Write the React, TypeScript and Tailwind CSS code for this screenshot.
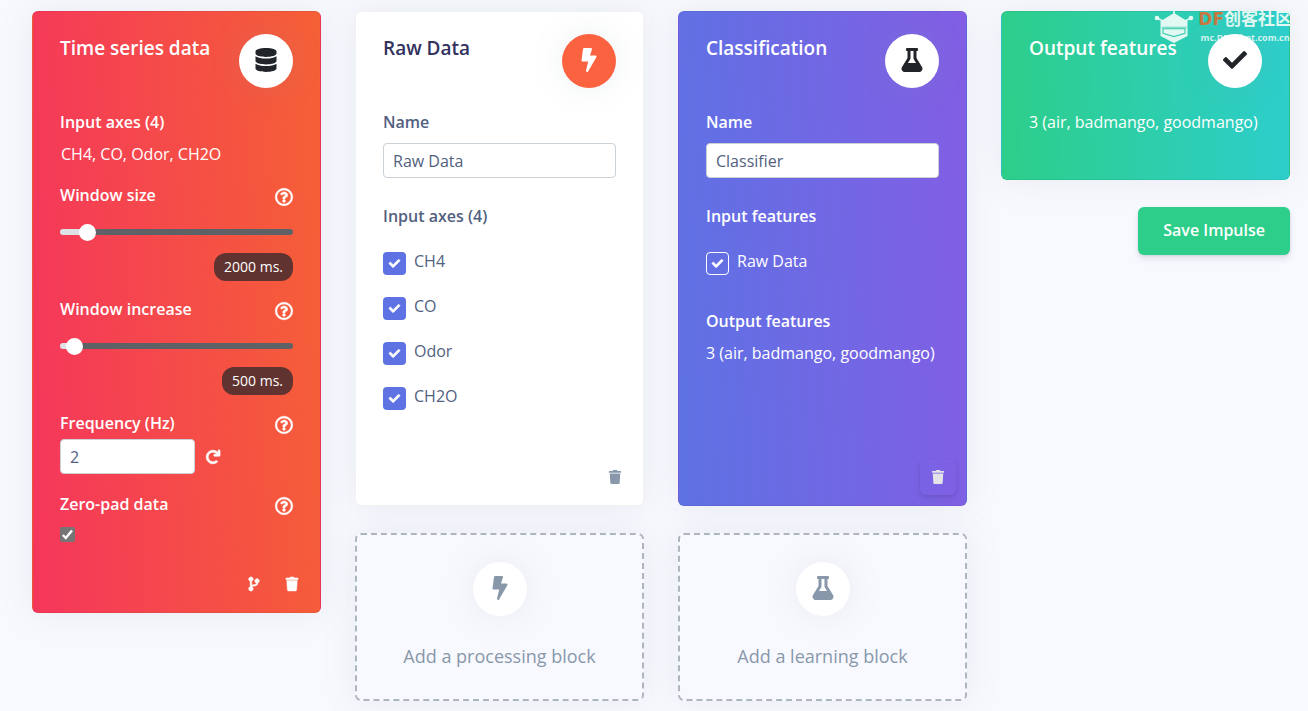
import React from "react";
import {
  FaBolt,
  FaCheck,
  FaCodeBranch,
  FaDatabase,
  FaFlask,
  FaRegQuestionCircle,
  FaRedo,
  FaTrash,
} from "react-icons/fa";

const shadow = "shadow-[0_0_32px_rgba(136,152,170,0.15)]";

function Card({ className, children }: { className: string; children: React.ReactNode }) {
  return (
    <section className={`flex flex-col rounded-md border border-black/5 px-[27px] pt-[22px] ${shadow} ${className}`}>
      {children}
    </section>
  );
}

function CardHeader({ title, titleClass, iconClass, children }: {
  title: string;
  titleClass: string;
  iconClass: string;
  children: React.ReactNode;
}) {
  return (
    <header className="flex h-[76px] items-start justify-between">
      <h2 className={`text-[19px] leading-7 font-semibold whitespace-nowrap ${titleClass}`}>{title}</h2>
      <span className={`flex size-[54px] shrink-0 items-start justify-center rounded-full pt-[14px] text-2xl ${shadow} ${iconClass}`}>
        {children}
      </span>
    </header>
  );
}

function Help({ label }: { label: string }) {
  return (
    <button type="button" aria-label={label} className="mt-[5px] text-lg">
      <FaRegQuestionCircle className="overflow-visible stroke-current stroke-[14]" />
    </button>
  );
}

function Slider({ id, label, value, max, fillClass, unitText }: {
  id: string;
  label: string;
  value: number;
  max: number;
  fillClass: string;
  unitText: string;
}) {
  return (
    <div className="h-[114px]">
      <div className="flex h-7 items-start justify-between">
        <label htmlFor={id} className="text-base leading-6 font-semibold">{label}</label>
        <Help label={`About ${label}`} />
      </div>
      <input
        id={id}
        type="range"
        min={0}
        max={max}
        defaultValue={value}
        className={`mt-[18px] block h-[6px] w-full appearance-none rounded-full ${fillClass} [&::-webkit-slider-thumb]:size-[17px] [&::-webkit-slider-thumb]:appearance-none [&::-webkit-slider-thumb]:rounded-full [&::-webkit-slider-thumb]:bg-white`}
      />
      <div className="mt-[18px] flex justify-end">
        <output htmlFor={id} className="rounded-xl bg-[#613330] px-[10px] text-sm leading-7 text-white">{unitText}</output>
      </div>
    </div>
  );
}

function Check({ label, boxClass, textClass }: { label: string; boxClass: string; textClass: string }) {
  return (
    <label className={`flex h-[45px] items-start gap-2 text-base leading-6 ${textClass}`}>
      <span className="mt-[3px] grid size-[23px] shrink-0">
        <input type="checkbox" defaultChecked className={`col-start-1 row-start-1 size-full appearance-none rounded-[4px] ${boxClass}`} />
        <FaCheck className="pointer-events-none col-start-1 row-start-1 size-[11px] place-self-center overflow-visible stroke-current stroke-[30] text-white" />
      </span>
      {label}
    </label>
  );
}

function NameField({ id, value, labelClass }: { id: string; value: string; labelClass: string }) {
  return (
    <>
      <label htmlFor={id} className={`text-base leading-6 font-semibold ${labelClass}`}>Name</label>
      <input
        id={id}
        defaultValue={value}
        className="mt-[9px] h-[35px] w-full rounded-[4px] border border-[#cad1d7] bg-white px-[9px] text-base text-[#525f7f]"
      />
    </>
  );
}

function AddBlock({ label, children }: { label: string; children: React.ReactNode }) {
  return (
    <button
      type="button"
      className={`flex h-[168px] w-full flex-col items-center rounded-md border-2 border-dashed border-[#adb5bd] bg-[#f8f9fe] pt-[27px] text-[#8898aa] ${shadow}`}
    >
      <span className={`flex size-[54px] items-start justify-center rounded-full bg-white pt-[14px] text-2xl ${shadow}`}>
        {children}
      </span>
      <span className="mt-[26px] text-lg leading-7">{label}</span>
    </button>
  );
}

function Watermark() {
  return (
    <div className="pointer-events-none absolute top-[6px] right-4 z-0 flex items-start gap-1">
      <svg viewBox="0 0 40 38" className="h-[38px] w-10" aria-hidden="true">
        <g fill="#e2f8f2">
          <circle cx="20" cy="3" r="2.100" />
          <circle cx="3" cy="12" r="2.300" />
          <circle cx="37" cy="12" r="2.300" />
          <path d="M20 7 33.500 15.200V30L20 37 6.500 30V15.200Z" />
          <path d="M20 3v6M3 12l6 3M37 12l-6 3" stroke="#e2f8f2" strokeWidth="1.600" />
        </g>
        <path d="M7.500 20.700h25v1.800h-25Z" fill="#39ccac" opacity=".55" />
        <path d="M9 22.800h22v4.600L20 30.600 9 27.400Z" fill="none" stroke="#39ccac" strokeWidth="1.100" />
      </svg>
      <div className="flex flex-col items-center">
        <p className="font-['Open_Sans','Noto_Sans_CJK_SC',sans-serif] text-[17px] leading-[26px] font-bold whitespace-nowrap text-[#e2f8f2]">
          <span className="font-['DejaVu_Sans',sans-serif] text-[#c87840]">DF</span>创客社区
        </p>
        <p className="font-['Open_Sans',sans-serif] text-[9px] leading-3 font-bold text-[#d5f6f1]">mc.DFRobot.com.cn</p>
      </div>
    </div>
  );
}

export default function App() {
  return (
    <main className="min-h-screen bg-[#f8f9fe] pt-[11px] pr-[18px] pb-[10px] pl-8 font-['Open_Sans',sans-serif]">
      <div className="grid grid-cols-4 items-start gap-x-[34px]">
        <Card className="bg-[linear-gradient(87deg,#f5365c,#f56036)] pb-[21px] text-white">
          <CardHeader title="Time series data" titleClass="text-white" iconClass="bg-white text-[#212529]">
            <FaDatabase />
          </CardHeader>
          <h3 className="text-base leading-6 font-semibold">Input axes (4)</h3>
          <p className="mt-2 mb-[17px] pl-px text-base leading-6">CH4, CO, Odor, CH2O</p>
          <Slider id="window-size" label="Window size" value={9} max={100} unitText="2000 ms." fillClass="bg-[linear-gradient(to_right,#dee2e6_12%,#5e6266_12%)]" />
          <Slider id="window-increase" label="Window increase" value={3} max={100} unitText="500 ms." fillClass="bg-[linear-gradient(to_right,#dee2e6_6%,#5e6266_6%)]" />
          <div className="flex h-7 items-start justify-between">
            <label htmlFor="frequency" className="text-base leading-6 font-semibold">Frequency (Hz)</label>
            <Help label="About frequency" />
          </div>
          <div className="flex items-center gap-[11px]">
            <input id="frequency" defaultValue="2" className="h-[35px] w-[135px] rounded-[4px] border border-[#cad1d7] bg-white px-[9px] text-base text-[#525f7f]" />
            <button type="button" aria-label="Reset frequency" className="text-sm">
              <FaRedo className="overflow-visible stroke-current stroke-[24]" />
            </button>
          </div>
          <div className="mt-[18px] flex h-7 items-start justify-between">
            <label htmlFor="zero-pad" className="text-base leading-6 font-semibold">Zero-pad data</label>
            <Help label="About zero-padding" />
          </div>
          <span className="mt-[7px] grid size-[15px]">
            <input id="zero-pad" type="checkbox" defaultChecked className="col-start-1 row-start-1 size-full appearance-none rounded-[2px] bg-[#757575]" />
            <svg viewBox="0 0 15 15" className="pointer-events-none col-start-1 row-start-1 size-[15px]" aria-hidden="true">
              <path d="m2.800 8 3 3L12 3.500" fill="none" stroke="currentColor" strokeWidth="2.400" />
            </svg>
          </span>
          <div className="mt-[35px] -mr-[6px] flex items-center justify-end gap-6 text-sm">
            <button type="button" aria-label="Versions">
              <FaCodeBranch className="overflow-visible stroke-current stroke-[24]" />
            </button>
            <button type="button" aria-label="Delete input block">
              <FaTrash className="overflow-visible stroke-current stroke-[16]" />
            </button>
          </div>
        </Card>

        <div className="flex flex-col gap-[27px]">
          <Card className="h-[495px] bg-white text-[#525f7f]">
            <CardHeader title="Raw Data" titleClass="text-[#32325d]" iconClass="bg-[#fb6340] text-white">
              <FaBolt />
            </CardHeader>
            <NameField id="dsp-name" value="Raw Data" labelClass="text-[#525f7f]" />
            <h3 className="mt-[26px] mb-[21px] text-base leading-6 font-semibold">Input axes (4)</h3>
            {["CH4", "CO", "Odor", "CH2O"].map((axis) => (
              <Check key={axis} label={axis} boxClass="bg-[#5e72e4]" textClass="text-[#525f7f]" />
            ))}
            <button type="button" aria-label="Delete processing block" className="mt-auto -mr-[6px] mb-[21px] self-end text-sm text-[#8898aa]">
              <FaTrash />
            </button>
          </Card>
          <AddBlock label="Add a processing block"><FaBolt /></AddBlock>
        </div>

        <div className="flex flex-col gap-[27px]">
          <Card className="h-[495px] bg-[linear-gradient(87deg,#5e72e4,#825ee4)] text-white">
            <CardHeader title="Classification" titleClass="text-white" iconClass="bg-white text-[#212529]">
              <FaFlask />
            </CardHeader>
            <NameField id="learn-name" value="Classifier" labelClass="text-white" />
            <h3 className="mt-[26px] mb-[21px] text-base leading-6 font-semibold">Input features</h3>
            <Check label="Raw Data" boxClass="border border-white" textClass="text-white" />
            <h3 className="mt-[15px] text-base leading-6 font-semibold">Output features</h3>
            <p className="mt-2 text-base leading-6 whitespace-nowrap">3 (air, badmango, goodmango)</p>
            <button
              type="button"
              aria-label="Delete learning block"
              className="mt-auto -mr-[17px] mb-[10px] flex size-9 items-center justify-center self-end rounded-md text-sm text-[#e2e4e8] shadow-[0_4px_6px_rgba(50,50,93,0.11),0_1px_3px_rgba(0,0,0,0.08)]"
            >
              <FaTrash />
            </button>
          </Card>
          <AddBlock label="Add a learning block"><FaFlask /></AddBlock>
        </div>

        <div className="flex flex-col items-end gap-[27px]">
          <Card className="h-[169px] w-full bg-[linear-gradient(87deg,#2dce89,#2dcecc)] text-white">
            <Watermark />
            <CardHeader title="Output features" titleClass="relative text-white" iconClass="relative bg-white text-[#212529]">
              <FaCheck />
            </CardHeader>
            <p className="text-base leading-6 whitespace-nowrap">3 (air, badmango, goodmango)</p>
          </Card>
          <button
            type="button"
            className="h-12 rounded-md bg-[#2dce89] px-[25px] pb-[2px] text-base font-semibold text-white shadow-[0_4px_6px_rgba(50,50,93,0.11),0_1px_3px_rgba(0,0,0,0.08)]"
          >
            Save Impulse
          </button>
        </div>
      </div>
    </main>
  );
}
